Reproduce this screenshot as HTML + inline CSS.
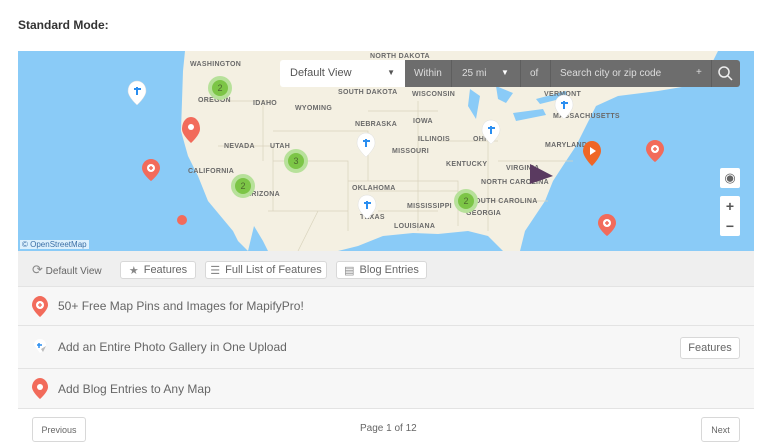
<!DOCTYPE html><html><head><meta charset="utf-8"><style>
*{box-sizing:border-box;margin:0;padding:0}
body{width:768px;height:448px;background:#fff;font-family:"Liberation Sans",sans-serif;position:relative;overflow:hidden;color:#555}
.a{position:absolute}
.t{font-size:12px;font-weight:bold;color:#333;left:18px;top:18px}
.lb{position:absolute;font-size:7px;font-weight:bold;color:#6a6a6a;letter-spacing:.3px;white-space:nowrap}
.btn{position:absolute;background:#fff;border:1px solid #d8d8d8;border-radius:3px;font-size:11px;color:#666;display:flex;align-items:center;justify-content:center;gap:5px}
.row{position:absolute;left:18px;width:736px;background:#f7f7f7;border-bottom:1px solid #e3e3e3;font-size:12px;color:#666;display:flex;align-items:center;padding-left:40px}
</style></head><body>
<div class="a t">Standard Mode:</div>
<div class="a" style="left:18px;top:51px;width:736px;height:200px;overflow:hidden;background:#8acbf7">
<svg width="736" height="200" style="position:absolute;left:0;top:0">
<path d="M167,0 L700,0 L690,20 L670,35 L640,40 L600,45 L578,55 L568,75 L558,95 L548,110 L535,130 L527,150 L517,165 L507,180 L502,200 L485,200 L470,185 L450,180 L420,183 L395,182 L365,185 L340,195 L320,200 L230,200 L220,190 L215,180 L205,168 L190,150 L180,125 L170,105 L163,80 L164,50 L165,20 Z" fill="#f4f0e2"/>
<path d="M230,200 L236,175 L245,190 L250,200Z" fill="#8acbf7"/>
<path d="M452,38 L462,45 L458,68 L450,55Z M478,35 L495,42 L488,52 L480,48Z M495,62 L525,58 L528,64 L498,70Z M518,48 L548,40 L550,46 L522,53Z" fill="#8acbf7"/>
<g stroke="#d9d2bd" stroke-width=".7" fill="none">
<path d="M180,50 L255,50 M245,50 L245,110 M255,80 L350,80 L350,130 M350,60 L420,60 M400,50 L400,180 M255,110 L330,110 L330,180 M200,95 L255,95 L255,160 M330,130 L440,130 L440,175 M420,90 L480,90 M350,140 L440,140 M470,90 L470,180 M440,150 L530,150 M480,110 L555,110 M250,160 L330,160 M360,160 L420,160 M280,200 L300,160"/>
</g></svg>
<div class="lb" style="left:172px;top:10px">WASHINGTON</div>
<div class="lb" style="left:352px;top:2px">NORTH DAKOTA</div>
<div class="lb" style="left:180px;top:46px">OREGON</div>
<div class="lb" style="left:235px;top:49px">IDAHO</div>
<div class="lb" style="left:277px;top:54px">WYOMING</div>
<div class="lb" style="left:320px;top:38px">SOUTH DAKOTA</div>
<div class="lb" style="left:394px;top:40px">WISCONSIN</div>
<div class="lb" style="left:526px;top:40px">VERMONT</div>
<div class="lb" style="left:535px;top:62px">MASSACHUSETTS</div>
<div class="lb" style="left:337px;top:70px">NEBRASKA</div>
<div class="lb" style="left:395px;top:67px">IOWA</div>
<div class="lb" style="left:400px;top:85px">ILLINOIS</div>
<div class="lb" style="left:455px;top:85px">OHIO</div>
<div class="lb" style="left:206px;top:92px">NEVADA</div>
<div class="lb" style="left:252px;top:92px">UTAH</div>
<div class="lb" style="left:374px;top:97px">MISSOURI</div>
<div class="lb" style="left:527px;top:91px">MARYLAND</div>
<div class="lb" style="left:428px;top:110px">KENTUCKY</div>
<div class="lb" style="left:488px;top:114px">VIRGINIA</div>
<div class="lb" style="left:170px;top:117px">CALIFORNIA</div>
<div class="lb" style="left:463px;top:128px">NORTH CAROLINA</div>
<div class="lb" style="left:334px;top:134px">OKLAHOMA</div>
<div class="lb" style="left:228px;top:140px">ARIZONA</div>
<div class="lb" style="left:452px;top:147px">SOUTH CAROLINA</div>
<div class="lb" style="left:389px;top:152px">MISSISSIPPI</div>
<div class="lb" style="left:448px;top:159px">GEORGIA</div>
<div class="lb" style="left:342px;top:163px">TEXAS</div>
<div class="lb" style="left:376px;top:172px">LOUISIANA</div>
<svg width="736" height="200" style="position:absolute;left:0;top:0">
<g fill="#7cc546" stroke="#b7e19a" stroke-width="4">
<circle cx="202" cy="37" r="10"/><circle cx="278" cy="110" r="10"/><circle cx="225" cy="135" r="10"/><circle cx="448" cy="150" r="10"/></g>
<g fill="#4d6b2e" font-size="9" font-family="Liberation Sans" text-anchor="middle"><text x="202" y="40">2</text><text x="278" y="113">3</text><text x="225" y="138">2</text><text x="448" y="153">2</text></g>
<g fill="#f26b5b">
<path d="M164,78 c0,-7 4,-12 9,-12 c5,0 9,5 9,12 c0,6 -9,14 -9,14 c0,0 -9,-8 -9,-14Z"/>
<path d="M124,117 c0,-5 4,-9 9,-9 c5,0 9,4 9,9 c0,6 -9,13 -9,13 c0,0 -9,-7 -9,-13Z"/>
<path d="M628,98 c0,-5 4,-9 9,-9 c5,0 9,4 9,9 c0,6 -9,13 -9,13 c0,0 -9,-7 -9,-13Z"/>
<path d="M580,172 c0,-5 4,-9 9,-9 c5,0 9,4 9,9 c0,6 -9,13 -9,13 c0,0 -9,-7 -9,-13Z"/>
<circle cx="164" cy="169" r="5"/></g>
<path d="M565,100 c0,-6 4,-10 9,-10 c5,0 9,4 9,10 c0,6 -9,15 -9,15 c0,0 -9,-9 -9,-15Z" fill="#ef6626"/>
<path d="M572,96 l6,4 -6,4Z" fill="#fff"/>
<g fill="#fff"><circle cx="173" cy="76" r="3"/><circle cx="133" cy="117" r="4"/><circle cx="637" cy="98" r="4"/><circle cx="589" cy="172" r="4"/></g>
<g stroke="#f26b5b" stroke-width="1.5"><path d="M131,117h4M133,115v4M635,98h4M637,96v4M587,172h4M589,170v4"/></g>
<path d="M512,113 L535,125 L512,133Z" fill="#5a3a60"/>
<g fill="#fff" stroke="#ddd" stroke-width=".5">
<path d="M110,40 c0,-6 4,-10 9,-10 c5,0 9,4 9,10 c0,6 -9,14 -9,14 c0,0 -9,-8 -9,-14Z"/>
<path d="M339,92 c0,-6 4,-10 9,-10 c5,0 9,4 9,10 c0,6 -9,14 -9,14 c0,0 -9,-8 -9,-14Z"/>
<path d="M340,154 c0,-6 4,-10 9,-10 c5,0 9,4 9,10 c0,6 -9,14 -9,14 c0,0 -9,-8 -9,-14Z"/>
<path d="M464,79 c0,-6 4,-10 9,-10 c5,0 9,4 9,10 c0,6 -9,14 -9,14 c0,0 -9,-8 -9,-14Z"/>
<path d="M537,54 c0,-6 4,-10 9,-10 c5,0 9,4 9,10 c0,6 -9,14 -9,14 c0,0 -9,-8 -9,-14Z"/>
</g>
<g stroke="#2a8ef0" stroke-width="2" fill="none"><path d="M116,38h7M119,36v8M345,90h7M348,88v8M346,152h7M349,150v8M470,77h7M473,75v8M543,52h7M546,50v8"/></g>
</svg>
<div class="a" style="left:2px;top:189px;font-size:8px;color:#3a6ea5;background:rgba(255,255,255,.7);padding:0 2px">© OpenStreetMap</div>
<div class="a" style="left:702px;top:117px;width:20px;height:20px;background:#fff;border-radius:2px;color:#666;font-size:13px;text-align:center;line-height:20px">◉</div>
<div class="a" style="left:702px;top:145px;width:20px;height:40px;background:#fff;border-radius:2px;color:#555;font-size:14px;font-weight:bold;text-align:center;line-height:20px">+<br>−</div>
</div>
<div class="a" style="left:280px;top:60px;width:125px;height:27px;background:#fff;border-radius:3px 0 0 3px;font-size:11px;color:#555;padding:7px 10px">Default View<span style="position:absolute;right:10px;top:8px;font-size:8px">▼</span></div>
<div class="a" style="left:405px;top:60px;width:335px;height:27px;background:#6d6d6d;border-radius:0 3px 3px 0;font-size:10px;color:#ddd">
<span class="a" style="left:9px;top:8px">Within</span>
<span class="a" style="left:46px;top:0;width:1px;height:27px;background:#5e5e5e"></span>
<span class="a" style="left:57px;top:8px">25 mi</span><span class="a" style="left:96px;top:8px;font-size:8px;color:#fff">▼</span>
<span class="a" style="left:115px;top:0;width:1px;height:27px;background:#5e5e5e"></span>
<span class="a" style="left:125px;top:8px">of</span>
<span class="a" style="left:145px;top:0;width:1px;height:27px;background:#5e5e5e"></span>
<span class="a" style="left:155px;top:8px">Search city or zip code</span>
<span class="a" style="left:291px;top:7px">+</span>
<span class="a" style="left:306px;top:0;width:1px;height:27px;background:#5e5e5e"></span>
<svg class="a" style="left:313px;top:6px" width="15" height="15"><circle cx="6" cy="6" r="5" stroke="#eee" stroke-width="1.5" fill="none"/><path d="M10,10l4,4" stroke="#eee" stroke-width="1.5"/></svg>
</div>
<div class="a" style="left:18px;top:251px;width:736px;height:36px;background:#efefef;border-bottom:1px solid #e3e3e3"></div>
<div class="a" style="left:32px;top:262px;font-size:10px;color:#666"><span style="font-size:13px;color:#888">⟳</span> Default View</div>
<div class="btn" style="left:120px;top:261px;width:76px;height:18px"><span style="color:#888">★</span>Features</div>
<div class="btn" style="left:205px;top:261px;width:122px;height:18px"><span style="color:#888">☰</span>Full List of Features</div>
<div class="btn" style="left:336px;top:261px;width:91px;height:18px"><span style="color:#888">▤</span>Blog Entries</div>
<div class="row" style="top:287px;height:39px">50+ Free Map Pins and Images for MapifyPro!</div>
<div class="row" style="top:326px;height:43px">Add an Entire Photo Gallery in One Upload</div>
<div class="row" style="top:369px;height:40px">Add Blog Entries to Any Map</div>
<svg class="a" style="left:30px;top:295px" width="20" height="104">
<path d="M2,10 c0,-5 4,-9 8,-9 c4,0 8,4 8,9 c0,5 -8,12 -8,12 c0,0 -8,-7 -8,-12Z" fill="#f26b5b"/><circle cx="10" cy="10" r="4" fill="#fff"/><path d="M8,10h4M10,8v4" stroke="#f26b5b" stroke-width="1.3"/>
<path d="M4,50 c0,-4 3,-6 6,-6 c3,0 6,2 6,6 c0,4 -6,8 -6,8Z" fill="#fff"/><path d="M11,54 l5,-3 -3,6Z" fill="#bbb"/><path d="M7,50h5M9,48v5" stroke="#2a8ef0" stroke-width="1.5"/>
<path d="M2,92 c0,-5 4,-9 8,-9 c4,0 8,4 8,9 c0,5 -8,12 -8,12 c0,0 -8,-7 -8,-12Z" fill="#f26b5b"/><circle cx="10" cy="92" r="3" fill="#fff"/>
</svg>
<div class="btn" style="left:680px;top:337px;width:60px;height:22px">Features</div>
<div class="btn" style="left:32px;top:417px;width:54px;height:25px;font-size:9px">Previous</div>
<div class="a" style="left:360px;top:423px;font-size:10px;color:#666">Page 1 of 12</div>
<div class="btn" style="left:701px;top:417px;width:39px;height:25px;font-size:9px">Next</div>
</body></html>
